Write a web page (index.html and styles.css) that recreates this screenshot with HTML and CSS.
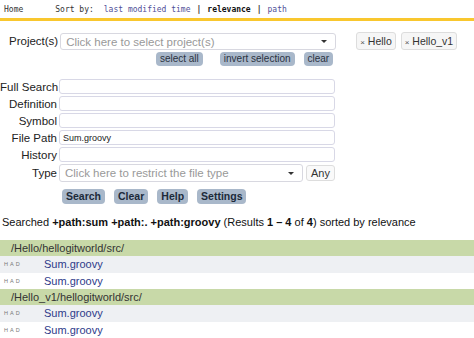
FILE: index.html
```html
<!DOCTYPE html>
<html lang="en">
<head>
    <meta charset="UTF-8">
    <title>OpenGrok Search</title>
    <link rel="stylesheet" href="styles.css">
</head>
<body>
    <div class="topbar">
        <a class="home" href="#">Home</a>
        <span class="sort">Sort by:</span>
        <a href="#">last modified time</a>
        <span class="sep">|</span>
        <b>relevance</b>
        <span class="sep">|</span>
        <a href="#">path</a>
    </div>

    <div class="projects">
        <label class="lbl">Project(s)</label>
        <div class="proj-col">
            <div class="select wide">
                <span class="placeholder">Click here to select project(s)</span>
                <span class="caret"></span>
            </div>
            <div class="proj-btns">
                <button class="btn small">select all</button>
                <button class="btn small invert">invert selection</button>
                <button class="btn small">clear</button>
            </div>
        </div>
        <div class="tags">
            <span class="tag"><span class="x">×</span> Hello</span>
            <span class="tag"><span class="x">×</span> Hello_v1</span>
        </div>
    </div>

    <div class="fields">
        <label class="lbl">Full Search</label><input class="field" type="text">
        <label class="lbl">Definition</label><input class="field" type="text">
        <label class="lbl">Symbol</label><input class="field" type="text">
        <label class="lbl">File Path</label><input class="field" type="text" value="Sum.groovy">
        <label class="lbl">History</label><input class="field" type="text">
        <label class="lbl">Type</label>
        <div class="type-row">
            <div class="select type">
                <span class="placeholder">Click here to restrict the file type</span>
                <span class="caret"></span>
            </div>
            <span class="any">Any</span>
        </div>
    </div>

    <div class="actions">
        <button class="btn">Search</button>
        <button class="btn">Clear</button>
        <button class="btn">Help</button>
        <button class="btn">Settings</button>
    </div>

    <p class="summary">Searched <b>+path:sum +path:. +path:groovy</b> (Results <b>1 – 4</b> of <b>4</b>) sorted by relevance</p>

    <table class="results">
        <tr class="dir"><td colspan="2"><a href="#">/Hello/hellogitworld/src/</a></td></tr>
        <tr class="odd"><td class="had">HAD</td><td><a href="#">Sum.groovy</a></td></tr>
        <tr><td class="had">HAD</td><td><a href="#">Sum.groovy</a></td></tr>
        <tr class="dir"><td colspan="2"><a href="#">/Hello_v1/hellogitworld/src/</a></td></tr>
        <tr class="odd"><td class="had">HAD</td><td><a href="#">Sum.groovy</a></td></tr>
        <tr><td class="had">HAD</td><td><a href="#">Sum.groovy</a></td></tr>
    </table>
</body>
</html>
```

FILE: styles.css
```css
body {
    margin: 0;
    font-family: "Liberation Sans", Arial, sans-serif;
    font-size: 11px;
    color: #222;
    background-color: white;
}
a {
    text-decoration: none;
}
.topbar {
    display: flex;
    align-items: center;
    height: 18px;
    padding-left: 4px;
    font-family: "DejaVu Sans Mono", monospace;
    font-size: 8px;
    border-bottom: 3px solid #f9c72e;
    white-space: pre;
}
.topbar a {
    color: #4f4f98;
}
.topbar .home {
    color: #333;
    margin-right: 32px;
}
.topbar .sort {
    color: #333;
    margin-right: 10px;
}
.topbar .sep {
    margin: 0 6px;
    color: #333;
    font-weight: bold;
}
.topbar b {
    color: #111;
}
.lbl {
    text-align: right;
    color: #222;
    font-size: 11.5px;
    white-space: nowrap;
}
.projects {
    display: flex;
    align-items: flex-start;
    margin-top: 12px;
    padding-left: 9px;
}
.projects .lbl {
    margin-top: 2px;
    margin-right: 2px;
}
.select {
    display: flex;
    align-items: center;
    height: 15px;
    border: 1px solid #d8d8e0;
    border-radius: 3px;
    padding: 0 8px 0 5px;
    color: #999;
    font-size: 11.5px;
    white-space: nowrap;
}
.select .placeholder {
    flex: 1;
}
.caret {
    width: 0;
    height: 0;
    border-left: 3px solid transparent;
    border-right: 3px solid transparent;
    border-top: 3px solid #333;
}
.wide {
    width: 261px;
}
.proj-btns {
    display: flex;
    justify-content: flex-end;
    margin-top: 2px;
    margin-right: 3px;
}
.btn {
    font-family: "Liberation Sans", Arial, sans-serif;
    font-size: 10.5px;
    font-weight: bold;
    color: #1c2a3a;
    background-color: #a9b8ca;
    border: none;
    border-radius: 4px;
    padding: 0 4px;
    height: 15px;
    line-height: 15px;
    white-space: nowrap;
}
.btn.small {
    font-weight: normal;
    font-size: 10px;
    color: #2a3240;
    height: 14px;
    line-height: 14px;
    padding: 0 4px;
}
.btn.invert {
    margin: 0 9px 0 17px;
}
.tags {
    display: flex;
    gap: 5px;
    margin-left: 20px;
    margin-top: -1px;
}
.tag {
    border: 1px solid #ddd;
    background-color: #f6f6f6;
    border-radius: 3px;
    padding: 0 3px;
    height: 16px;
    line-height: 16px;
    color: #333;
    font-size: 10.5px;
    white-space: nowrap;
}
.tag .x {
    font-size: 8px;
    color: #555;
}
.fields {
    display: grid;
    grid-template-columns: 57px 276px;
    column-gap: 2px;
    row-gap: 2px;
    align-items: center;
    margin-top: 13px;
}
.field {
    box-sizing: border-box;
    height: 15px;
    border: 1px solid #d8d8e6;
    border-radius: 3px;
    padding: 0 3px;
    font-family: "Liberation Sans", Arial, sans-serif;
    font-size: 9px;
    color: #222;
    outline: none;
}
.type-row {
    display: flex;
    align-items: center;
    gap: 3px;
}
.select.type {
    width: 229px;
    height: 16px;
}
.any {
    border: 1px solid #ddd;
    border-radius: 3px;
    padding: 1px 4px;
    color: #333;
    background-color: #fafafa;
}
.actions {
    display: flex;
    gap: 9px;
    margin-top: 7px;
    padding-left: 62px;
}
.summary {
    margin: 12px 0 0 2px;
    font-size: 11px;
    color: #111;
}
.results {
    width: 100%;
    margin-top: 12px;
    border-collapse: collapse;
}
.results td {
    padding: 0;
    height: 16.5px;
    font-size: 11px;
}
.results a {
    color: #2d3a8a;
}
.results .dir td {
    background-color: #c8d9a8;
    padding-left: 11px;
    height: 16px;
}
.results .dir a {
    color: #333;
}
.results .odd td {
    background-color: #eef0f3;
}
.results td.had {
    width: 40px;
    padding-left: 4px;
    font-size: 5.5px;
    letter-spacing: 2px;
    color: #777;
}
```
